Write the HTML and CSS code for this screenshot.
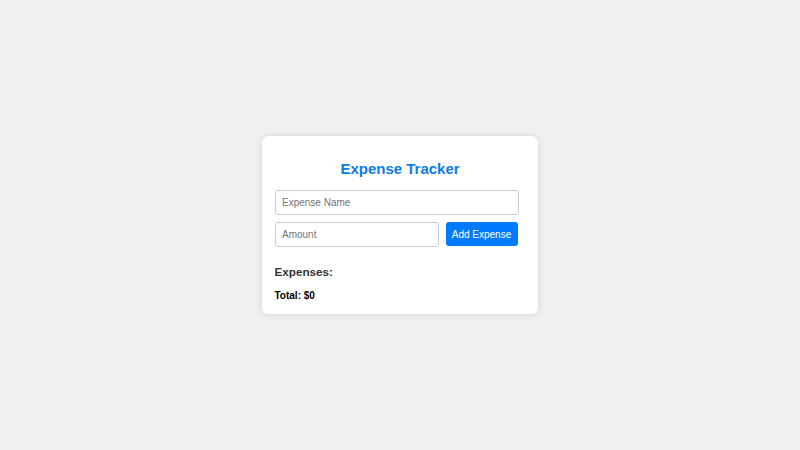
FILE: index.html
```html
<!DOCTYPE html>
<html lang="en">
<head>
<meta charset="UTF-8">
<title>Expense Tracker</title>
<link rel="stylesheet" href="styles.css">
</head>
<body>
  <div class="tracker">
    <h2 class="tracker-title">Expense Tracker</h2>
    <div class="tracker-form">
      <input class="field" type="text" placeholder="Expense Name">
      <div class="form-row">
        <input class="field field-amount" type="number" placeholder="Amount">
        <button class="add-btn" type="button">Add Expense</button>
      </div>
    </div>
    <h3 class="list-title">Expenses:</h3>
    <ul class="expense-list"></ul>
    <div class="total">Total: $0</div>
  </div>
</body>
</html>
```

FILE: styles.css
```css
html, body {
  margin: 0;
  height: 100%;
}

body {
  background: #f0f0f0;
  font-family: "Liberation Sans", Arial, sans-serif;
  font-size: 10px;
  display: flex;
  align-items: center;
  justify-content: center;
}

.tracker {
  box-sizing: border-box;
  width: 276px;
  padding: 12.5px;
  background: #ffffff;
  border-radius: 6px;
  box-shadow: 0 0 6px rgba(0, 0, 0, 0.12);
}

.tracker-title {
  margin: 11.5px 0 13.5px;
  font-size: 15px;
  line-height: 17px;
  text-align: center;
  color: #0b7ce8;
}

.tracker-form {
  width: 244px;
  display: flex;
  flex-direction: column;
  gap: 7px;
}

.form-row {
  display: flex;
  gap: 7px;
  margin-right: 1px;
}

.field {
  box-sizing: border-box;
  height: 25px;
  padding: 0 6.5px;
  border: 1px solid #cccccc;
  border-radius: 3px;
  font-family: inherit;
  font-size: 10px;
  color: #333333;
  background: #ffffff;
  outline: none;
}

.field::placeholder {
  color: #757575;
}

.field-amount {
  flex: 1;
  min-width: 0;
  -moz-appearance: textfield;
}

.field-amount::-webkit-outer-spin-button,
.field-amount::-webkit-inner-spin-button {
  -webkit-appearance: none;
  margin: 0;
}

.add-btn {
  box-sizing: border-box;
  width: 72px;
  height: 24px;
  padding: 0;
  border: none;
  border-radius: 3px;
  background: #007bff;
  color: #ffffff;
  font-family: inherit;
  font-size: 10px;
  cursor: pointer;
}

.list-title {
  margin: 18px 0 11.7px;
  font-size: 11.7px;
  line-height: 13.5px;
  color: #333333;
}

.expense-list {
  margin: 0;
  padding: 0;
  list-style: none;
}

.total {
  font-weight: bold;
  font-size: 10px;
  line-height: 11.5px;
  color: #000000;
}
```
